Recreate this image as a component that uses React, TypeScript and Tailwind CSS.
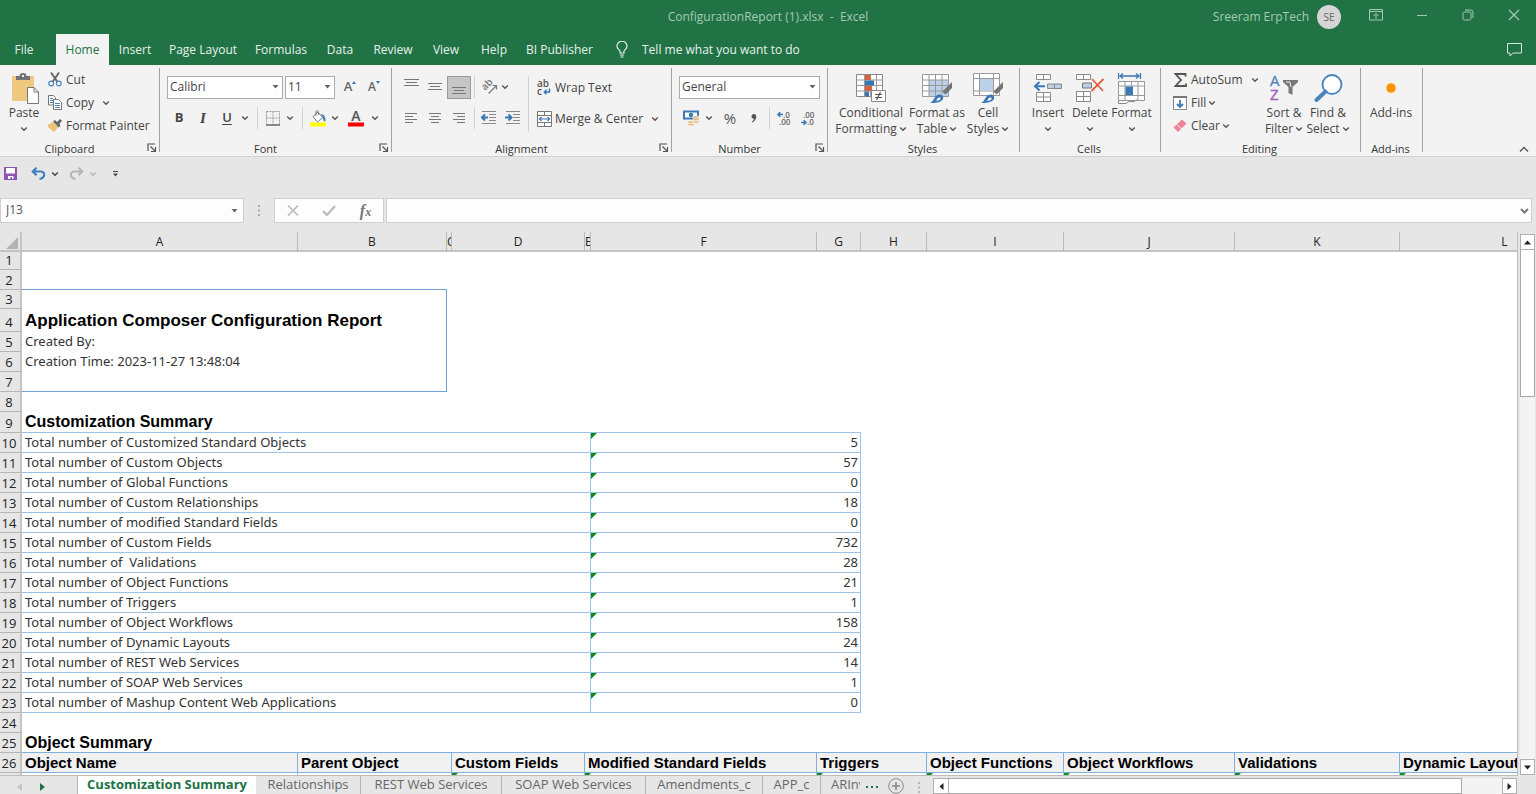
import React from "react";

type Kids = { children?: React.ReactNode };

function Chevron({ color = "#555" }: { color?: string }) {
  return (
    <svg width="8" height="6" viewBox="0 0 8 6" className="shrink-0" aria-hidden="true">
      <path d="M1.2 1.4 4 4.2 6.8 1.4" fill="none" stroke={color} strokeWidth="1.4" />
    </svg>
  );
}

function Caret() {
  return (
    <svg width="7" height="4" viewBox="0 0 7 4" aria-hidden="true">
      <path d="M0.5 0h6L3.5 3.6z" fill="#666" />
    </svg>
  );
}

function Launcher() {
  return (
    <button aria-label="More options" className="flex h-2 items-center">
      <svg width="10" height="10" viewBox="0 0 10 10" aria-hidden="true">
        <path d="M1 8V1h7M3.5 3.5 8 8M8.5 4v4.5H4" fill="none" stroke="#555" strokeWidth="1.2" />
      </svg>
    </button>
  );
}

function Group({ label, width, launcher, children }: Kids & { label: string; width: string; launcher?: boolean }) {
  return (
    <section aria-label={label} className={`flex h-[84px] shrink-0 flex-col justify-between border-r border-[#a3a3a3] ${width}`}>
      <div className="flex">{children}</div>
      <div className="flex h-2 items-center pr-0.5">
        <span className={`flex-1 text-center text-[11px] leading-none text-[#333] ${launcher ? "mr-2" : ""}`}>{label}</span>
        {launcher && <Launcher />}
      </div>
    </section>
  );
}

function Slot({ w, label, children }: Kids & { w: string; label: string }) {
  return (
    <button aria-label={label} className={`flex h-5 shrink-0 items-center justify-center ${w}`}>
      {children}
    </button>
  );
}

function Sep({ w, tall }: { w: string; tall?: boolean }) {
  return (
    <div className={`flex shrink-0 justify-center ${w} ${tall ? "h-14" : "h-[22px]"}`}>
      <div className="w-px bg-[#d2d2d2]" />
    </div>
  );
}

function BigButton({ w, lines, icon, arrow, arrowBelow }: { w: string; lines: string[]; icon: React.ReactNode; arrow?: boolean; arrowBelow?: boolean }) {
  return (
    <button className={`flex shrink-0 flex-col items-center pt-1 text-[12px] leading-4 whitespace-nowrap text-[#444] ${w}`}>
      <span className="mb-px flex h-8 items-center justify-center">{icon}</span>
      {lines.map((l, i) => (
        <span key={l} className="flex items-center gap-0.5">
          {l}
          {arrow && i === lines.length - 1 && <Chevron />}
        </span>
      ))}
      {arrowBelow && (
        <span className="flex h-4 items-center">
          <Chevron />
        </span>
      )}
    </button>
  );
}

function SmallButton({ icon, label, arrow, gap = "gap-1" }: { icon: React.ReactNode; label: string; arrow?: boolean; gap?: string }) {
  return (
    <button className={`flex h-[23px] items-center text-[12px] whitespace-nowrap text-[#444] ${gap}`}>
      <span className="flex items-center gap-1">
        <span className="flex w-3.5 justify-center">{icon}</span>
        {label}
      </span>
      {arrow && <Chevron />}
    </button>
  );
}

function SelectBox({ w, label, value }: { w: string; label: string; value: string }) {
  return (
    <div className={`relative h-[23px] shrink-0 ${w}`}>
      <select aria-label={label} defaultValue={value} className="block h-full w-full appearance-none border border-[#ababab] bg-white pl-0.5 text-[12px] text-[#444]">
        <option>{value}</option>
      </select>
      <span className="pointer-events-none absolute inset-y-0 right-1 flex items-center">
        <Caret />
      </span>
    </div>
  );
}

function Lines({ rows }: { rows: [number, number, number][] }) {
  return (
    <svg width="16" height="16" viewBox="0 0 16 16" aria-hidden="true">
      {rows.map(([x, y, w]) => (
        <rect key={y} x={x} y={y} width={w} height="1" fill="#777" />
      ))}
    </svg>
  );
}

function IndentIcon({ right }: { right?: boolean }) {
  return (
    <svg width="16" height="16" viewBox="0 0 16 16" aria-hidden="true">
      <path d="M1 1.500h14M8 4.500h7M8 7.500h7M8 10.500h7M1 13.500h14" stroke="#8a8a8a" />
      {right ? (
        <path d="M0 7.500h6M3.500 4.500l3 3-3 3" fill="none" stroke="#3a78b5" strokeWidth="2" />
      ) : (
        <path d="M7 7.500H1M4 4.500l-3 3 3 3" fill="none" stroke="#3a78b5" strokeWidth="2" />
      )}
    </svg>
  );
}

const PasteIcon = (
  <svg width="29" height="31" viewBox="0 0 29 31" aria-hidden="true">
    <path d="M2 3h22v25H2z" fill="#edc87e" />
    <path d="M6 7V3h3.500C9.500 1 11 0 13 0s3.500 1 3.500 3H20v4z" fill="#737373" />
    <path d="M12 2h2v2h-2z" fill="#f3f3f3" />
    <path d="M17.500 14.500h6.500l4.500 4.500v11.500H17.500z" fill="#fff" stroke="#777" />
    <path d="M24 14.500V19H28.500" fill="none" stroke="#777" />
  </svg>
);

const CutIcon = (
  <svg width="14" height="15" viewBox="0 0 14 15" aria-hidden="true">
    <path d="M3 0.500 9.500 10M11 0.500 4.500 10" stroke="#666" strokeWidth="1.900" fill="none" />
    <circle cx="3.200" cy="11.500" r="2.400" fill="none" stroke="#4a84bd" strokeWidth="1.200" />
    <circle cx="10.800" cy="11.500" r="2.400" fill="none" stroke="#4a84bd" strokeWidth="1.200" />
  </svg>
);

const CopyIcon = (
  <svg width="14" height="15" viewBox="0 0 14 15" aria-hidden="true">
    <path d="M.5.5h5l2 2V10h-7z" fill="#fff" stroke="#777" />
    <path d="M2 3.500h3M2 5.500h3M2 7.500h3" stroke="#4a84bd" />
    <path d="M5.500 4.500h5l3 3v7h-8z" fill="#fff" stroke="#777" />
    <path d="M7 8.500h5M7 10.500h5M7 12.500h5" stroke="#4a84bd" />
  </svg>
);

const PainterIcon = (
  <svg width="14" height="13" viewBox="0 0 14 13" aria-hidden="true">
    <path d="M0 5.500 5 3l5 5.500L6 13 0 8z" fill="#edc07a" />
    <path d="M5 2.500 7 1l2 2 3-3 2 1.500L11.500 5l1 2-2 1.500z" fill="#666" />
  </svg>
);

const BordersIcon = (
  <svg width="14" height="15" viewBox="0 0 14 15" aria-hidden="true">
    <path d="M.5.5h13v13M.5.5v13M7 .5v13M.5 7h13" fill="none" stroke="#999" strokeDasharray="2 1" />
    <path d="M0 14h14" stroke="#666" strokeWidth="1.500" />
  </svg>
);

const BucketIcon = (
  <svg width="17" height="17" viewBox="0 0 17 17" aria-hidden="true">
    <path d="M3 6.500 8 2l4.500 5.500-5 4.500z" fill="#fff" stroke="#777" />
    <path d="M6 6V1.500C6 .5 8.500.3 8.500 2v3" fill="none" stroke="#777" />
    <path d="M11 4c3 0 5 3 4.500 7.500-2-.5-3-1.500-2.800-4z" fill="#4a84bd" />
    <path d="M0 12.500h16v4H0z" fill="#ff0" />
  </svg>
);

const OrientIcon = (
  <svg width="16" height="14" viewBox="0 0 16 14" className="overflow-visible" aria-hidden="true">
    <text fontSize="10" fontWeight="600" fill="#777" transform="translate(4 11) rotate(-45)">ab</text>
    <path d="M7.500 13.500 15 6M11.500 5.500H15.500V9.500" fill="none" stroke="#777" strokeWidth="1.200" />
  </svg>
);

const WrapIcon = (
  <svg width="14" height="16" viewBox="0 0 14 16" className="overflow-visible" aria-hidden="true">
    <text fontSize="10" fontWeight="600" fill="#555">
      <tspan x="0" y="7">ab</tspan>
      <tspan x="0" y="15">c</tspan>
    </text>
    <path d="M12.500 8.500V12H7.500M9.500 9.800 7.300 12l2.200 2.200" fill="none" stroke="#3a78b5" strokeWidth="1.500" />
  </svg>
);

const MergeIcon = (
  <svg width="15" height="16" viewBox="0 0 15 16" className="shrink-0" aria-hidden="true">
    <path d="M.5.5h14v15H.5zM.5 4.500h14M.5 11.500h14M7.500.5v4M7.500 11.500v4" fill="#fff" stroke="#777" />
    <path d="M2.500 8h10M4.500 6l-2 2 2 2M10.500 6l2 2-2 2" fill="none" stroke="#3a78b5" strokeWidth="1.200" />
  </svg>
);

const MoneyIcon = (
  <svg width="17" height="16" viewBox="0 0 17 16" aria-hidden="true">
    <path d="M1 1.500h14v7H1z" fill="#fff" stroke="#3a78b5" strokeWidth="2" />
    <circle cx="8" cy="5" r="2.200" fill="#3a78b5" />
    <path d="M10 6h6v2h-6zM10 8.500h6v2h-6zM5 11h5.500v2H5zM5 13.500h6V15.500H5zM11 11h5v2h-5z" fill="#eabc75" stroke="#f3f3f3" strokeWidth=".5" />
  </svg>
);

function DecimalIcon({ more }: { more?: boolean }) {
  return (
    <svg width="14" height="15" viewBox="0 0 14 15" className="overflow-visible" aria-hidden="true">
      <text fontSize="8" fontWeight="600" fill="#666">
        <tspan x={more ? 6 : 2} y="6.500">{more ? ".0" : ".00"}</tspan>
        <tspan x={more ? 2 : 6} y="14">{more ? ".00" : ".0"}</tspan>
      </text>
      {more ? (
        <path d="M6 3.500H1M3.300 1.200 1 3.500l2.300 2.300" fill="none" stroke="#3a78b5" strokeWidth="1.600" />
      ) : (
        <path d="M0 11.500h5M2.700 9.200 5 11.500l-2.300 2.300" fill="none" stroke="#3a78b5" strokeWidth="1.600" />
      )}
    </svg>
  );
}

const ConditionalIcon = (
  <svg width="30" height="30" viewBox="0 0 30 30" aria-hidden="true">
    <path d="M.5 1.500h26v22H.5z" fill="#fff" stroke="#888" />
    <path d="M.5 7h26M.5 12.500h26M.5 18h26M8.500 1.500v22M14.500 1.500v22M20.500 1.500v22" stroke="#999" />
    <path d="M9 2h5.500v5H9zM9 13h7v5H9z" fill="#d9603b" />
    <path d="M9 7.500h9v5H9zM9 18.500h4v5H9z" fill="#3a78b5" />
    <path d="M15.500 17.500h14v11h-14z" fill="#fff" stroke="#888" />
    <path d="M19 21.500h7M19 24.500h7M24.500 19l-4 8" stroke="#555" strokeWidth="1.200" />
  </svg>
);

const Brush = (
  <g>
    <path d="M30 9v6l-6.500 6.500-3-3z" fill="#737373" />
    <path d="M8 30c4-1 4-8 9-8.500 3 0 5 2 4 4.500-1.500 3-8 4.500-13 4z" fill="#3a78b5" />
    <path d="M13 28c2.500 0 1.500-3.500 4.500-3.500 2 0 1.500 3.500-4.500 3.500z" fill="#fff" />
  </g>
);

const FormatTableIcon = (
  <svg width="30" height="30" viewBox="0 0 30 30" aria-hidden="true">
    <path d="M.5 1.500h26v22H.5z" fill="#fff" />
    <path d="M7 7h19.500v16.500H7z" fill="#bdd0e9" />
    <path d="M.5 1.500h26v22H.5zM.5 7h26M.5 12.500h26M.5 18h26M7 1.500v22M13.500 1.500v22M20 1.500v22" fill="none" stroke="#999" />
    {Brush}
  </svg>
);

const CellStylesIcon = (
  <svg width="31" height="31" viewBox="0 0 31 31" aria-hidden="true">
    <path d="M.5.5h26v22H.5z" fill="#fff" />
    <path d="M.5.5h26v22H.5zM.5 5.500h26M.5 18h26M6.500.5v22M20.500.5v22" fill="none" stroke="#999" />
    <path d="M7 6h13v11.500H7z" fill="#bdd0e9" />
    {Brush}
  </svg>
);

const InsertIcon = (
  <svg width="30" height="30" viewBox="0 0 30 30" aria-hidden="true">
    <path d="M3.500 1.500h14v5h-14zM10.500 1.500v5M3.500 19.500h14v9h-14zM10.500 19.500v9M3.500 24h14" fill="#fff" stroke="#8a8a8a" />
    <path d="M14.500 11h14v4.500h-14zM21.500 11v4.500" fill="#bdd0e9" stroke="#888" />
    <path d="M12 13.200H2M6.500 9l-4.500 4.200L6.500 17.500" fill="none" stroke="#3a78b5" strokeWidth="2" />
  </svg>
);

const DeleteIcon = (
  <svg width="30" height="30" viewBox="0 0 30 30" aria-hidden="true">
    <path d="M1.500 1.500h14v5h-14zM8.500 1.500v5M1.500 18.500h14v10h-14zM8.500 18.500v10M1.500 23.500h14" fill="#fff" stroke="#8a8a8a" />
    <path d="M7.500 10h9v5h-9z" fill="#bdd0e9" stroke="#777" />
    <path d="M17 6l11 12M28.500 6 16.500 18" stroke="#dd5f3c" strokeWidth="1.800" />
  </svg>
);

const FormatIcon = (
  <svg width="28" height="31" viewBox="0 0 28 31" aria-hidden="true">
    <path d="M.5 0v6M22.500 0v6M2 3h19M5 .5 2 3l3 2.500M18 .5 21 3l-3 2.500" fill="none" stroke="#3a78b5" strokeWidth="1.300" />
    <path d="M.5 8.500h26v19H.5zM.5 13h26M.5 22.500h26M7 8.500v19M20 8.500v19M13.500 8.500v4.500" fill="#fff" stroke="#999" />
    <path d="M7.500 13.500H15V22H7.500z" fill="#3a78b5" />
    <path d="M.5 27.500v3h8l2-2h6l2-2" fill="none" stroke="#888" />
  </svg>
);

const SigmaIcon = (
  <svg width="13" height="14" viewBox="0 0 13 14" aria-hidden="true">
    <path d="M11.500 3.500V1H1.500l5.500 6-5.500 6h10.500v-2.500" fill="none" stroke="#555" strokeWidth="1.800" />
  </svg>
);

const FillIcon = (
  <svg width="14" height="14" viewBox="0 0 14 14" aria-hidden="true">
    <path d="M.5.5h13v13H.5z" fill="#fff" stroke="#888" />
    <path d="M0 1h14" stroke="#777" strokeWidth="2" />
    <path d="M7 4v7M4 8l3 3 3-3" fill="none" stroke="#3a78b5" strokeWidth="1.800" />
  </svg>
);

const EraserIcon = (
  <svg width="14" height="13" viewBox="0 0 14 13" aria-hidden="true">
    <path d="M9 .5 13.500 4.500 8.500 9.500 4 5z" fill="#ee8296" />
    <path d="M3.500 5.500 8 10 5 13 .5 8.500z" fill="#ee8296" />
  </svg>
);

const SortIcon = (
  <svg width="29" height="28" viewBox="0 0 29 28" className="overflow-visible" aria-hidden="true">
    <text fontSize="15" strokeWidth=".3">
      <tspan x="0" y="12" fill="#4a84bd" stroke="#4a84bd">A</tspan>
      <tspan x="0" y="26" fill="#9b62b8" stroke="#9b62b8">Z</tspan>
    </text>
    <path d="M13 6h15v2l-5.500 5v8l-4-2v-6L13 8z" fill="#777" />
    <path d="M16 8h4l1 5" fill="none" stroke="#f3f3f3" />
  </svg>
);

const FindIcon = (
  <svg width="29" height="29" viewBox="0 0 29 29" aria-hidden="true">
    <circle cx="18" cy="10.500" r="9.500" fill="#fff" stroke="#4a84bd" strokeWidth="1.800" />
    <path d="M11.500 17.500 2.500 26" stroke="#4a84bd" strokeWidth="4" strokeLinecap="round" />
  </svg>
);

const AddInsIcon = (
  <svg width="12" height="12" viewBox="0 0 12 12" aria-hidden="true">
    <circle cx="6" cy="6" r="5.500" fill="#fbd9a4" />
    <circle cx="6" cy="6" r="4.500" fill="#ff9208" />
  </svg>
);

const ribbonTabs = [
  { name: "Insert", w: "w-[52px]" },
  { name: "Page Layout", w: "w-[84px]" },
  { name: "Formulas", w: "w-[72px]" },
  { name: "Data", w: "w-[46px]" },
  { name: "Review", w: "w-[60px]" },
  { name: "View", w: "w-[46px]" },
  { name: "Help", w: "w-[50px]" },
  { name: "BI Publisher", w: "w-[81px]" },
];

function TitleBar() {
  return (
    <header className="bg-[#217346] text-white">
      <div className="grid h-[34px] grid-cols-[1fr_auto_1fr] items-center text-[12px] text-[#a5cab5]">
        <span />
        <h1 className="whitespace-pre">{"ConfigurationReport (1).xlsx  -  Excel"}</h1>
        <div className="flex items-center justify-end pr-4">
          <span>Sreeram ErpTech</span>
          <span className="ml-2 flex size-6 items-center justify-center rounded-full bg-[#d5d5d5] text-[10px] text-[#666]">SE</span>
          <button aria-label="Ribbon display options" className="mb-1 ml-7">
            <svg width="14" height="12" viewBox="0 0 14 12" fill="none" stroke="#a5cab5">
              <path d="M.5.5h13v10.500H.5zM.5 2.500h13M7 10V5M4.500 7 7 4.500 9.500 7" />
            </svg>
          </button>
          <button aria-label="Minimize" className="mb-1 ml-[34px]">
            <svg width="11" height="11" viewBox="0 0 11 11" stroke="#a5cab5">
              <path d="M0 5.500h10" />
            </svg>
          </button>
          <button aria-label="Restore" className="mb-1 ml-[34px]">
            <svg width="12" height="12" viewBox="0 0 12 12" fill="none" stroke="#a5cab5">
              <rect x="1" y="3" width="8" height="8" rx="1.500" />
              <path d="M3 1h5.500a2.500 2.500 0 0 1 2.500 2.500V9" />
            </svg>
          </button>
          <button aria-label="Close" className="mb-1 ml-[34px]">
            <svg width="12" height="12" viewBox="0 0 12 12" stroke="#a5cab5" strokeWidth="1.200">
              <path d="M1 1l10 10M11 1 1 11" />
            </svg>
          </button>
        </div>
      </div>
      <nav aria-label="Ribbon" className="flex h-[31px] items-stretch text-[12px] text-[#e7f1eb]">
        <button className="w-14 pr-2 text-center">File</button>
        <button className="w-[53px] bg-[#f3f3f3] text-center text-[#217346]">Home</button>
        {ribbonTabs.map((t) => (
          <button key={t.name} className={`text-center whitespace-nowrap ${t.w}`}>
            {t.name}
          </button>
        ))}
        <button className="ml-4 flex items-center gap-3.5 whitespace-nowrap">
          <svg width="12" height="17" viewBox="0 0 12 17" fill="none" stroke="#e7f1eb" strokeWidth="1.200" aria-hidden="true">
            <path d="M4 12V10.500C4 9 1 8 1 5.200a5 5 0 0 1 10 0C11 8 8 9 8 10.500V12zM4 14h4M4.500 16h3" />
          </svg>
          Tell me what you want to do
        </button>
        <button aria-label="Comments" className="mr-3.5 ml-auto">
          <svg width="15" height="14" viewBox="0 0 15 14" fill="none" stroke="#d6e7dd" aria-hidden="true">
            <path d="M.5.5h14v9.500H6L3 13v-3H.5z" />
          </svg>
        </button>
      </nav>
    </header>
  );
}

function Ribbon() {
  return (
    <div className="flex h-[92px] shrink-0 border-b border-[#d2d2d2] bg-[#f3f3f3] pt-[3px]">
      <Group label="Clipboard" width="w-40" launcher>
        <BigButton w="w-12" icon={PasteIcon} lines={["Paste"]} arrowBelow />
        <div className="flex flex-col">
          <SmallButton icon={CutIcon} label="Cut" />
          <SmallButton icon={CopyIcon} label="Copy" arrow gap="gap-2" />
          <SmallButton icon={PainterIcon} label="Format Painter" />
        </div>
      </Group>

      <Group label="Font" width="w-[232px]" launcher>
        <div className="flex flex-col gap-2.5 pt-2 pl-[7px] text-[#444]">
          <div className="flex h-[22px] items-center">
            <SelectBox w="w-[116px]" label="Font name" value="Calibri" />
            <span className="w-0.5" />
            <SelectBox w="w-[50px]" label="Font size" value="11" />
            <Slot w="w-[30px]" label="Increase font size">
              <span className="text-[13px] font-semibold text-[#666]">A</span>
              <svg width="4" height="12" viewBox="0 0 4 12"><path d="M0 3 2 0l2 3z" fill="#3a78b5" /></svg>
            </Slot>
            <Slot w="w-[18px]" label="Decrease font size">
              <span className="text-[12px] font-semibold text-[#666]">A</span>
              <svg width="4" height="12" viewBox="0 0 4 12"><path d="M0 0h4L2 3z" fill="#3a78b5" /></svg>
            </Slot>
          </div>
          <div className="flex h-5 items-center">
            <Slot w="w-6" label="Bold"><b className="text-[13px] font-bold">B</b></Slot>
            <Slot w="w-6" label="Italic"><i className="font-['Liberation_Serif',serif] text-[15px] font-bold">I</i></Slot>
            <Slot w="w-6" label="Underline"><u className="text-[13px] font-semibold underline-offset-2">U</u></Slot>
            <Slot w="w-3" label="Underline styles"><Chevron /></Slot>
            <Sep w="w-3" />
            <Slot w="w-5" label="Borders">{BordersIcon}</Slot>
            <Slot w="w-3.5" label="Border styles"><Chevron /></Slot>
            <Sep w="w-2.5" />
            <Slot w="w-[22px]" label="Fill color">{BucketIcon}</Slot>
            <Slot w="w-3" label="Fill colors"><Chevron /></Slot>
            <Slot w="w-[30px]" label="Font color">
              <svg width="16" height="17" viewBox="0 0 16 17" className="overflow-visible">
                <text x="8" y="11" textAnchor="middle" fontSize="14" fontWeight="600" fill="#555">A</text>
                <path d="M0 12.500h16v4H0z" fill="#f00" />
              </svg>
            </Slot>
            <Slot w="w-2" label="Font colors"><Chevron /></Slot>
          </div>
        </div>
      </Group>

      <Group label="Alignment" width="w-[280px]" launcher>
        <div className="flex flex-col gap-2.5 pt-2 pl-[7px]">
          <div className="flex h-[22px] items-center">
            <Slot w="w-6" label="Top align"><Lines rows={[[1, 0, 15], [3, 3, 11], [1, 6, 15]]} /></Slot>
            <Slot w="w-6" label="Middle align"><Lines rows={[[1, 4, 14], [3, 7, 10], [1, 10, 14]]} /></Slot>
            <button aria-label="Bottom align" className="flex h-[23px] w-6 items-center justify-center border border-[#9a9a9a] bg-[#c6c6c6]">
              <Lines rows={[[1, 8, 14], [3, 11, 10], [1, 14, 14]]} />
            </button>
            <Sep w="w-1.5" />
            <Slot w="w-6" label="Orientation">{OrientIcon}</Slot>
            <Slot w="w-2" label="Orientation options"><Chevron /></Slot>
          </div>
          <div className="flex h-5 items-center">
            <Slot w="w-6" label="Align left"><Lines rows={[[2, 3, 12], [2, 6, 8], [2, 9, 12], [2, 12, 8]]} /></Slot>
            <Slot w="w-6" label="Center"><Lines rows={[[2, 3, 12], [4, 6, 8], [2, 9, 12], [4, 12, 8]]} /></Slot>
            <Slot w="w-6" label="Align right"><Lines rows={[[2, 3, 12], [6, 6, 8], [2, 9, 12], [6, 12, 8]]} /></Slot>
            <Sep w="w-1.5" />
            <Slot w="w-6" label="Decrease indent"><IndentIcon /></Slot>
            <Slot w="w-6" label="Increase indent"><IndentIcon right /></Slot>
          </div>
        </div>
        <div className="pt-2"><Sep w="w-1.5" tall /></div>
        <div className="flex flex-col gap-2 pt-2 pl-1.5">
          <SmallButton icon={WrapIcon} label="Wrap Text" />
          <SmallButton icon={MergeIcon} label="Merge & Center" arrow gap="gap-2" />
        </div>
      </Group>

      <Group label="Number" width="w-[156px]" launcher>
        <div className="flex flex-col gap-2.5 pt-2 pl-[7px] text-[#555]">
          <div className="flex h-[22px] items-center">
            <SelectBox w="w-[141px]" label="Number format" value="General" />
          </div>
          <div className="flex h-5 items-center">
            <Slot w="w-6" label="Accounting format">{MoneyIcon}</Slot>
            <Slot w="w-3" label="Accounting formats"><Chevron /></Slot>
            <Slot w="w-[30px]" label="Percent style"><span className="text-[15px]">%</span></Slot>
            <Slot w="w-[18px]" label="Comma style">
              <svg width="6" height="9" viewBox="0 0 6 9"><path d="M3 0c3.500 0 3 6-1.500 8.500L1 7.500C2.500 6.500 3 5.500 3 4.800-.5 5-.2 0 3 0z" fill="#555" /></svg>
            </Slot>
            <Sep w="w-3" />
            <Slot w="w-[18px]" label="Increase decimal"><DecimalIcon more /></Slot>
            <Slot w="w-[30px]" label="Decrease decimal"><DecimalIcon /></Slot>
          </div>
        </div>
      </Group>

      <Group label="Styles" width="w-48">
        <div className="flex pl-[5px]">
          <BigButton w="w-[76px]" icon={ConditionalIcon} lines={["Conditional", "Formatting"]} arrow />
          <BigButton w="w-14" icon={FormatTableIcon} lines={["Format as", "Table"]} arrow />
          <BigButton w="w-[46px]" icon={CellStylesIcon} lines={["Cell", "Styles"]} arrow />
        </div>
      </Group>

      <Group label="Cells" width="w-[141px]">
        <div className="flex pl-1.5">
          <BigButton w="w-11" icon={InsertIcon} lines={["Insert"]} arrowBelow />
          <BigButton w="w-10" icon={DeleteIcon} lines={["Delete"]} arrowBelow />
          <BigButton w="w-[43px]" icon={FormatIcon} lines={["Format"]} arrowBelow />
        </div>
      </Group>

      <Group label="Editing" width="w-[200px]">
        <div className="flex w-[103px] flex-col pl-3">
          <SmallButton icon={SigmaIcon} label="AutoSum" arrow gap="gap-2" />
          <SmallButton icon={FillIcon} label="Fill" arrow gap="gap-0.5" />
          <SmallButton icon={EraserIcon} label="Clear" arrow gap="gap-0.5" />
        </div>
        <BigButton w="w-10" icon={SortIcon} lines={["Sort &", "Filter"]} arrow />
        <BigButton w="w-12" icon={FindIcon} lines={["Find &", "Select"]} arrow />
      </Group>

      <Group label="Add-ins" width="w-[62px]">
        <BigButton w="w-[60px]" icon={AddInsIcon} lines={["Add-ins"]} />
      </Group>

      <button aria-label="Collapse the ribbon" className="mt-auto mr-[7px] mb-[3px] ml-auto">
        <svg width="10" height="7" viewBox="0 0 10 7"><path d="M1 5.500 5 1.500l4 4" fill="none" stroke="#555" strokeWidth="1.300" /></svg>
      </button>
    </div>
  );
}

function QuickAccess() {
  return (
    <div className="flex h-[41px] shrink-0 items-start pt-2.5 pl-1">
      <button aria-label="Save">
        <svg width="13" height="13" viewBox="0 0 13 13">
          <path d="M0 0h13v13H0z" fill="#8e55b0" />
          <path d="M2 1h9v5.500H2zM4 9h5.500v3H8v-2H6.500v2H4z" fill="#fff" />
        </svg>
      </button>
      <button aria-label="Undo" className="ml-3.5">
        <svg width="15" height="13" viewBox="0 0 15 13"><path d="M2 4.500h7.500c5 0 5 6.500-1 7.500M5.500.8 1.800 4.500l3.700 3.700" fill="none" stroke="#3f7fbb" strokeWidth="2.200" /></svg>
      </button>
      <button aria-label="Undo history" className="mt-1 ml-[5px]"><Chevron color="#444" /></button>
      <button aria-label="Redo" className="ml-2.5">
        <svg width="15" height="13" viewBox="0 0 15 13"><path d="M13 4.500H5.500c-5 0-5 6.500 1 7.500M9.500.8l3.700 3.700-3.700 3.700" fill="none" stroke="#b5b5b5" strokeWidth="2" /></svg>
      </button>
      <button aria-label="Redo history" className="mt-1 ml-[5px]"><Chevron color="#b5b5b5" /></button>
      <button aria-label="Customize toolbar" className="mt-1 ml-4">
        <svg width="5" height="6" viewBox="0 0 5 6"><path d="M0 .5h5" stroke="#444" /><path d="M0 2.500h5L2.500 5.500z" fill="#444" /></svg>
      </button>
    </div>
  );
}

function FormulaBar() {
  return (
    <div className="flex h-[25px] shrink-0 pr-1">
      <div className="relative w-[244px] shrink-0">
        <input aria-label="Name box" defaultValue="J13" className="block h-full w-full border border-[#cfcfcf] bg-[#fdfdfd] pb-0.5 pl-[5px] text-[12px] text-[#555]" />
        <span className="pointer-events-none absolute inset-y-0 right-1.5 flex items-center"><Caret /></span>
      </div>
      <div className="flex w-[30px] items-center justify-center">
        <svg width="2" height="11" viewBox="0 0 2 11"><path d="M0 0h2v2H0zM0 4.500h2v2H0zM0 9h2v2H0z" fill="#aaa" /></svg>
      </div>
      <div className="flex w-[110px] shrink-0 items-center justify-around border border-[#cfcfcf] bg-[#fdfdfd]">
        <button aria-label="Cancel"><svg width="12" height="11" viewBox="0 0 12 11"><path d="M1 .5 11 10.500M11 .5 1 10.500" stroke="#bdbdbd" strokeWidth="1.700" /></svg></button>
        <button aria-label="Enter"><svg width="14" height="11" viewBox="0 0 14 11"><path d="M1 6l4 4L13 1" fill="none" stroke="#bdbdbd" strokeWidth="2.400" /></svg></button>
        <button aria-label="Insert function" className="font-['Liberation_Serif',serif] text-[16px] leading-none font-bold text-[#777] italic">
          f<span className="text-[12px]">x</span>
        </button>
      </div>
      <div className="relative ml-0.5 flex-1">
        <input aria-label="Formula" className="block h-full w-full border border-[#cfcfcf] bg-[#fdfdfd] px-1 text-[12px]" />
        <span className="pointer-events-none absolute inset-y-0 right-[3px] flex items-center">
          <svg width="9" height="6" viewBox="0 0 9 6"><path d="M1 1l3.500 3.500L8 1" fill="none" stroke="#777" strokeWidth="2" /></svg>
        </span>
      </div>
    </div>
  );
}

const columns = [
  { name: "A", w: "w-[276px]" },
  { name: "B", w: "w-[149px]" },
  { name: "C", w: "w-[5px]" },
  { name: "D", w: "w-[133px]" },
  { name: "E", w: "w-[6px]" },
  { name: "F", w: "w-[226px]" },
  { name: "G", w: "w-11" },
  { name: "H", w: "w-[66px]" },
  { name: "I", w: "w-[137px]" },
  { name: "J", w: "w-[171px]" },
  { name: "K", w: "w-[165px]" },
  { name: "L", w: "w-[210px]" },
];

const summary: [string, number][] = [
  ["Total number of Customized Standard Objects", 5],
  ["Total number of Custom Objects", 57],
  ["Total number of Global Functions", 0],
  ["Total number of Custom Relationships", 18],
  ["Total number of modified Standard Fields", 0],
  ["Total number of Custom Fields", 732],
  ["Total number of  Validations", 28],
  ["Total number of Object Functions", 21],
  ["Total number of Triggers", 1],
  ["Total number of Object Workflows", 158],
  ["Total number of Dynamic Layouts", 24],
  ["Total number of REST Web Services", 14],
  ["Total number of SOAP Web Services", 1],
  ["Total number of Mashup Content Web Applications", 0],
];

const objectColumns: [string, number][] = [
  ["Object Name", 1],
  ["Parent Object", 2],
  ["Custom Fields", 1],
  ["Modified Standard Fields", 2],
  ["Triggers", 2],
  ["Object Functions", 1],
  ["Object Workflows", 1],
  ["Validations", 1],
  ["Dynamic Layouts", 1],
];

function Row({ n, h = "h-5", children }: Kids & { n: number; h?: string }) {
  return (
    <tr className={h}>
      <th scope="row" className="border-r-2 border-b border-r-[#c4c4c4] border-b-[#b5b5b5] bg-[#e6e6e6] pr-0.5 text-center align-bottom text-[13px] leading-[17px] font-normal text-[#222]">
        {n}
      </th>
      {children}
    </tr>
  );
}

const text = "pl-[3px] text-left align-top text-[13px] leading-[18px] whitespace-pre text-[#333] font-['Noto_Sans',sans-serif]";
const heading = "pl-[3px] text-left leading-[18px] whitespace-nowrap font-bold text-black font-['Liberation_Sans',Arial,sans-serif]";

function Flag() {
  return (
    <svg width="6" height="6" viewBox="0 0 6 6" className="absolute top-0 left-0" aria-hidden="true">
      <path d="M0 0h6L0 6z" fill="#0f8a1f" />
    </svg>
  );
}

function Sheet() {
  return (
    <div className="min-w-0 flex-1 overflow-hidden border-r border-b border-[#bdbdbd] bg-white">
      <table className="w-[1610px] table-fixed border-separate border-spacing-0">
        <colgroup>
          <col className="w-[22px]" />
          {columns.map((c) => (
            <col key={c.name} className={c.w} />
          ))}
        </colgroup>
        <thead>
          <tr className="h-5">
            <th className="border-r-2 border-b-2 border-r-[#c4c4c4] border-b-[#c4c4c4] bg-[#e6e6e6] align-bottom">
              <svg width="13" height="13" viewBox="0 0 13 13" className="ml-1.5 block" aria-label="Select all">
                <path d="M12 0v12H0z" fill="#b3b3b3" />
              </svg>
            </th>
            {columns.map((c) => (
              <th key={c.name} scope="col" className="overflow-hidden border-r border-b-2 border-r-[#bbb] border-b-[#c4c4c4] bg-[#e6e6e6] align-bottom text-[12px] leading-[16px] font-normal text-[#222]">
                {c.name}
              </th>
            ))}
          </tr>
        </thead>
        <tbody>
          <Row n={1} h="h-[18px]" />
          <Row n={2}>
            <td colSpan={2} className="border-b border-[#6fa3d8]" />
          </Row>
          <Row n={3} h="h-[19px]">
            <td colSpan={2} className="border-r border-[#6fa3d8]" />
          </Row>
          <Row n={4} h="h-[23px]">
            <td colSpan={2} className={`border-r border-[#6fa3d8] text-[17px] ${heading}`}>Application Composer Configuration Report</td>
          </Row>
          <Row n={5}>
            <td colSpan={2} className={`border-r border-[#6fa3d8] ${text}`}>Created By:</td>
          </Row>
          <Row n={6}>
            <td colSpan={2} className={`border-r border-[#6fa3d8] ${text}`}>Creation Time: 2023-11-27 13:48:04</td>
          </Row>
          <Row n={7}>
            <td colSpan={2} className="border-r border-b border-[#6fa3d8]" />
          </Row>
          <Row n={8} />
          <Row n={9} h="h-[21px]">
            <td colSpan={7} className={`border-b border-[#9dc3e8] text-[16px] ${heading}`}>Customization Summary</td>
          </Row>
          {summary.map(([label, value], i) => (
            <Row key={label} n={10 + i}>
              <td colSpan={5} className={`border-r border-b border-[#9dc3e8] ${text}`}>{label}</td>
              <td colSpan={2} className="relative border-r border-b border-[#9dc3e8] pr-0.5 text-right align-top font-['Noto_Sans',sans-serif] text-[13px] leading-[18px] text-[#333]">
                <Flag />
                {value}
              </td>
            </Row>
          ))}
          <Row n={24} />
          <Row n={25}>
            <td colSpan={12} className={`border-b border-[#7fb0e0] text-[16px] ${heading}`}>Object Summary</td>
          </Row>
          <Row n={26}>
            {objectColumns.map(([name, span]) => (
              <td key={name} colSpan={span} className={`border-r border-b border-[#7fb0e0] bg-[#f1f1f1] text-[15px] ${heading}`}>{name}</td>
            ))}
          </Row>
          <Row n={27}>
            {objectColumns.map(([name, span], i) => (
              <td key={name} colSpan={span} className="relative border-r border-[#9dc3e8]">{i > 1 && <Flag />}</td>
            ))}
          </Row>
        </tbody>
      </table>
    </div>
  );
}

function Arrow({ d }: { d: string }) {
  return (
    <svg width="7" height="7" viewBox="0 0 7 7" aria-hidden="true">
      <path d={d} fill="#222" />
    </svg>
  );
}

function VerticalScroll() {
  return (
    <div className="mt-0.5 mb-px ml-0.5 flex w-[15px] shrink-0 flex-col bg-[#f3f3f3]">
      <button aria-label="Scroll up" className="flex h-4 shrink-0 items-center justify-center border border-[#b0b0b0] bg-white"><Arrow d="M0 5.500h7L3.500 1.500z" /></button>
      <div className="h-[147px] shrink-0 border border-t-0 border-[#a8a8a8] bg-white" />
      <button aria-label="Scroll down" className="mt-auto flex h-4 shrink-0 items-center justify-center border border-[#b0b0b0] bg-white"><Arrow d="M0 1.500h7L3.500 5.500z" /></button>
    </div>
  );
}

const sheetTabs = [
  { name: "Relationships", w: "w-[105px]" },
  { name: "REST Web Services", w: "w-[141px]" },
  { name: "SOAP Web Services", w: "w-36" },
  { name: "Amendments_c", w: "w-[117px]" },
  { name: "APP_c", w: "w-[58px]" },
];

function SheetBar() {
  return (
    <footer className="flex h-[18px] shrink-0 overflow-hidden text-[13px] leading-[16px] text-[#666]">
      <div className="flex w-[78px] shrink-0 items-center border-r border-[#b5b5b5] pt-1 pl-[17px]">
        <button aria-label="Previous sheets"><svg width="5" height="8" viewBox="0 0 5 8"><path d="M5 0v8L0 4z" fill="#c3c3c3" /></svg></button>
        <button aria-label="Next sheets" className="ml-[18px]"><svg width="5" height="8" viewBox="0 0 5 8"><path d="M0 0v8l5-4z" fill="#217346" /></svg></button>
      </div>
      <button className="w-[178px] shrink-0 bg-white pb-0.5 font-bold whitespace-nowrap text-[#217346]">Customization Summary</button>
      {sheetTabs.map((t) => (
        <button key={t.name} className={`shrink-0 border-r border-[#b5b5b5] pb-0.5 whitespace-nowrap ${t.w}`}>{t.name}</button>
      ))}
      <button className="ml-2.5 w-[29px] shrink-0 overflow-hidden pb-0.5 text-left whitespace-nowrap">ARInvoice</button>
      <button aria-label="More sheets" className="ml-1.5 flex w-3 shrink-0 items-center pt-1">
        <svg width="12" height="2" viewBox="0 0 12 2"><path d="M0 0h2v2H0zM5 0h2v2H5zM10 0h2v2h-2z" fill="#217346" /></svg>
      </button>
      <button aria-label="New sheet" className="ml-2.5 shrink-0 pt-0.5">
        <svg width="16" height="16" viewBox="0 0 16 16" fill="none" stroke="#888"><circle cx="8" cy="8" r="7.300" /><path d="M8 4v8M4 8h8" strokeWidth="1.500" /></svg>
      </button>
      <div className="flex w-[29px] shrink-0 items-center justify-center pt-1">
        <svg width="2" height="11" viewBox="0 0 2 11"><path d="M0 0h2v2H0zM0 4.500h2v2H0zM0 9h2v2H0z" fill="#b5b5b5" /></svg>
      </div>
      <div className="mt-0.5 mr-[19px] flex h-4 flex-1 bg-[#f3f3f3]">
        <button aria-label="Scroll left" className="flex w-4 shrink-0 items-center justify-center border border-[#b0b0b0] bg-white"><Arrow d="M5.500 0v7L1.500 3.500z" /></button>
        <div className="flex-1 border border-l-0 border-[#a8a8a8] bg-white" />
        <div className="w-10" />
        <button aria-label="Scroll right" className="flex w-[15px] shrink-0 items-center justify-center border border-[#b0b0b0] bg-white"><Arrow d="M1.500 0v7l4-3.500z" /></button>
      </div>
    </footer>
  );
}

export default function App() {
  return (
    <div className="flex h-screen flex-col overflow-hidden bg-[#e6e6e6] font-['Open_Sans','Noto_Sans',sans-serif]">
      <TitleBar />
      <Ribbon />
      <QuickAccess />
      <FormulaBar />
      <main className="flex min-h-0 flex-1 pt-[9px]">
        <Sheet />
        <VerticalScroll />
        <div className="w-px" />
      </main>
      <SheetBar />
    </div>
  );
}
